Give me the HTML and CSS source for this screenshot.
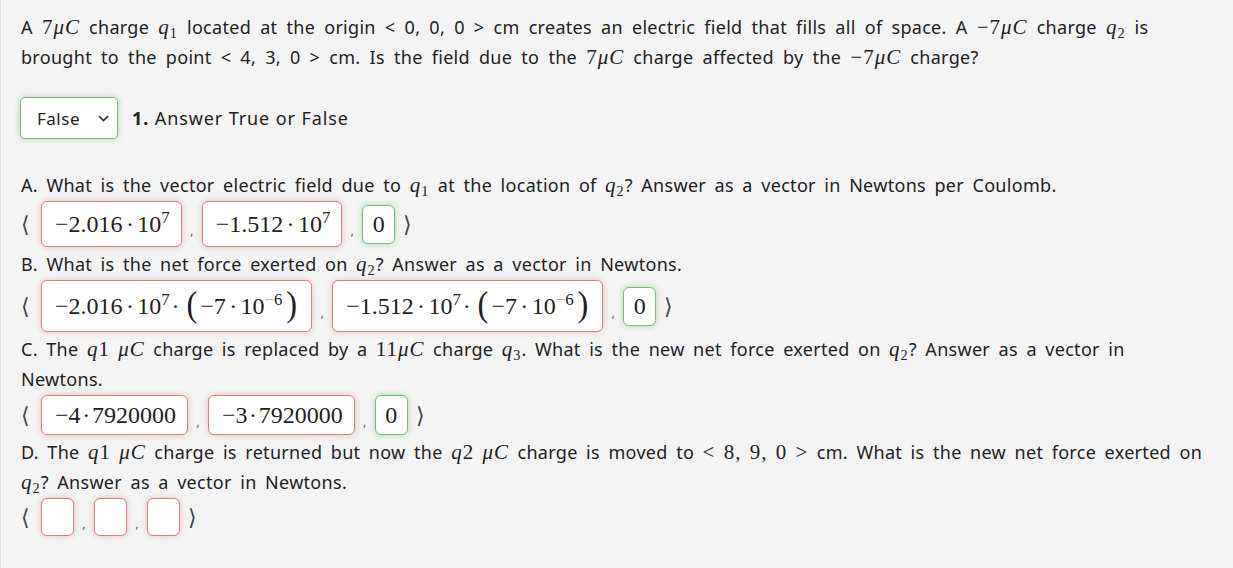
FILE: index.html
```html
<!DOCTYPE html>
<html lang="en">
<head>
    <meta charset="UTF-8">
    <meta name="viewport" content="width=device-width, initial-scale=1.0">
    <title>Electric Field Problem</title>
    <link rel="stylesheet" href="styles.css">
</head>
<body>
    <div class="problem">
        <p class="intro">A <span class="m">7<i>μC</i></span> charge <span class="m"><i>q</i><sub>1</sub></span> located at the origin &lt; 0, 0, 0 &gt; cm creates an electric field that fills all of space. A <span class="m">−7<i>μC</i></span> charge <span class="m"><i>q</i><sub>2</sub></span> is<br>brought to the point &lt; 4, 3, 0 &gt; cm. Is the field due to the <span class="m">7<i>μC</i></span> charge affected by the <span class="m">−7<i>μC</i></span> charge?</p>

        <div class="choice">
            <div class="select correct">
                <span>False</span>
                <svg width="11" height="7" viewBox="0 0 11 7"><path d="M1 1.2 L5.5 5.6 L10 1.2" fill="none" stroke="#333" stroke-width="1.7"/></svg>
            </div>
            <span class="choice-label"><b>1.</b> Answer True or False</span>
        </div>

        <!-- Part A -->
        <p class="part first">A. What is the vector electric field due to <span class="m"><i>q</i><sub>1</sub></span> at the location of <span class="m"><i>q</i><sub>2</sub></span>? Answer as a vector in Newtons per Coulomb.</p>
        <div class="vec vec-a">
            <span class="br">⟨</span>
            <span class="ans wrong"><span class="mq">−2.016<span class="dot">·</span>10<sup>7</sup></span></span>
            <span class="sep">,</span>
            <span class="ans wrong"><span class="mq">−1.512<span class="dot">·</span>10<sup>7</sup></span></span>
            <span class="sep">,</span>
            <span class="ans correct zero"><span class="mq">0</span></span>
            <span class="br close">⟩</span>
        </div>

        <!-- Part B -->
        <p class="part">B. What is the net force exerted on <span class="m"><i>q</i><sub>2</sub></span>? Answer as a vector in Newtons.</p>
        <div class="vec vec-b">
            <span class="br">⟨</span>
            <span class="ans wrong"><span class="mq">−2.016<span class="dot">·</span>10<sup>7</sup><span class="dot tight">·</span><span class="paren">(</span>−7<span class="dot">·</span>10<sup><span class="faint">−</span>6</sup><span class="paren">)</span></span></span>
            <span class="sep">,</span>
            <span class="ans wrong"><span class="mq">−1.512<span class="dot">·</span>10<sup>7</sup><span class="dot tight">·</span><span class="paren">(</span>−7<span class="dot">·</span>10<sup><span class="faint">−</span>6</sup><span class="paren">)</span></span></span>
            <span class="sep">,</span>
            <span class="ans correct zero"><span class="mq">0</span></span>
            <span class="br close">⟩</span>
        </div>

        <!-- Part C -->
        <p class="part">C. The <span class="m"><i>q</i>1 <i>μC</i></span> charge is replaced by a <span class="m">11<i>μC</i></span> charge <span class="m"><i>q</i><sub>3</sub></span>. What is the new net force exerted on <span class="m"><i>q</i><sub>2</sub></span>? Answer as a vector in<br>Newtons.</p>
        <div class="vec vec-c">
            <span class="br">⟨</span>
            <span class="ans wrong"><span class="mq">−4<span class="dot">·</span>7920000</span></span>
            <span class="sep">,</span>
            <span class="ans wrong"><span class="mq">−3<span class="dot">·</span>7920000</span></span>
            <span class="sep">,</span>
            <span class="ans correct zero"><span class="mq">0</span></span>
            <span class="br close">⟩</span>
        </div>

        <!-- Part D -->
        <p class="part">D. The <span class="m"><i>q</i>1 <i>μC</i></span> charge is returned but now the <span class="m"><i>q</i>2 <i>μC</i></span> charge is moved to <span class="m">&lt; 8, 9, 0 &gt;</span> cm. What is the new net force exerted on<br><span class="m"><i>q</i><sub>2</sub></span>? Answer as a vector in Newtons.</p>
        <div class="vec vec-d">
            <span class="br">⟨</span>
            <span class="ans wrong empty"></span>
            <span class="sep">,</span>
            <span class="ans wrong empty"></span>
            <span class="sep">,</span>
            <span class="ans wrong empty"></span>
            <span class="br close">⟩</span>
        </div>
    </div>
</body>
</html>
```

FILE: styles.css
```css
* {
    margin: 0;
    padding: 0;
    box-sizing: border-box;
}

body {
    font-family: "Noto Sans", Arial, sans-serif;
    font-size: 18px;
    background-color: #f4f4f4;
    color: #222;
}

.problem {
    min-height: 568px;
    padding: 12px 10px 0 19px;
    border-left: 1px solid #dcdcdc;
}

p {
    line-height: 30px;
    letter-spacing: 0.3px;
    word-spacing: 3.5px;
}

.intro,
.part {
    padding-left: 1px;
}

.intro {
    word-spacing: 4.1px;
}

/* inline math */
.m {
    font-family: "Liberation Serif", "Times New Roman", serif;
    font-size: 21px;
    letter-spacing: 1px;
    word-spacing: 2px;
}

.m i {
    font-style: italic;
}

.m sub {
    font-size: 0.68em;
    vertical-align: -0.25em;
    line-height: 0;
}

/* True / False select */
.choice {
    display: flex;
    align-items: center;
    margin-top: 25px;
}

.select {
    display: flex;
    align-items: center;
    justify-content: space-between;
    width: 98px;
    height: 42px;
    padding: 0 8px 0 16px;
    background: #fff;
    border-radius: 5px;
    font-size: 17px;
    letter-spacing: 0.5px;
}

.choice-label {
    margin-left: 14px;
    letter-spacing: 0.9px;
}

.part.first {
    margin-top: 31px;
}

/* answer vectors */
.vec {
    display: flex;
    align-items: center;
    padding: 1px 0 2px;
}

.br {
    width: 21px;
    font-family: "DejaVu Sans", sans-serif;
    font-size: 22px;
    font-weight: 300;
    color: #444;
    padding-left: 1px;
}

.br.close {
    margin-left: 7px;
}

.sep {
    width: 20px;
    text-align: center;
    font-size: 13px;
    color: #666;
    position: relative;
    top: 6px;
}

.ans {
    display: inline-flex;
    align-items: center;
    height: 40px;
    padding: 0 11px 0 13px;
    background: #fff;
    border-radius: 6px;
    white-space: nowrap;
}

.mq {
    font-family: "Liberation Serif", "Times New Roman", serif;
    font-size: 24px;
    line-height: 1;
    color: #222;
}

.vec-a .ans { height: 46px; }
.vec-b .ans { height: 52px; }
.vec-a .zero,
.vec-b .zero { height: 39px; }
.vec-d .ans { height: 38px; }

.ans.zero {
    width: 33px;
    padding: 0;
    justify-content: center;
}

.ans.empty {
    width: 33px;
    padding: 0;
}

.mq sup {
    font-size: 0.7em;
    vertical-align: 0.55em;
    line-height: 0;
}

.dot {
    margin: 0 0.14em;
}

.vec-c .dot {
    margin: 0 0.07em;
}

.dot.tight {
    margin: 0 0.12em 0 0.08em;
}

.paren {
    display: inline-block;
    font-size: 1.35em;
    line-height: 0;
    transform: scaleY(1.1);
    position: relative;
    top: 1px;
    margin: 0 3px 0 4px;
}

.faint {
    color: #aaa;
}

.wrong {
    border: 1px solid #d98080;
    box-shadow: 0 0 6px rgba(214, 90, 90, 0.35);
}

.correct {
    border: 1px solid #7cbb7c;
    box-shadow: 0 0 6px rgba(80, 170, 80, 0.4);
}
```
